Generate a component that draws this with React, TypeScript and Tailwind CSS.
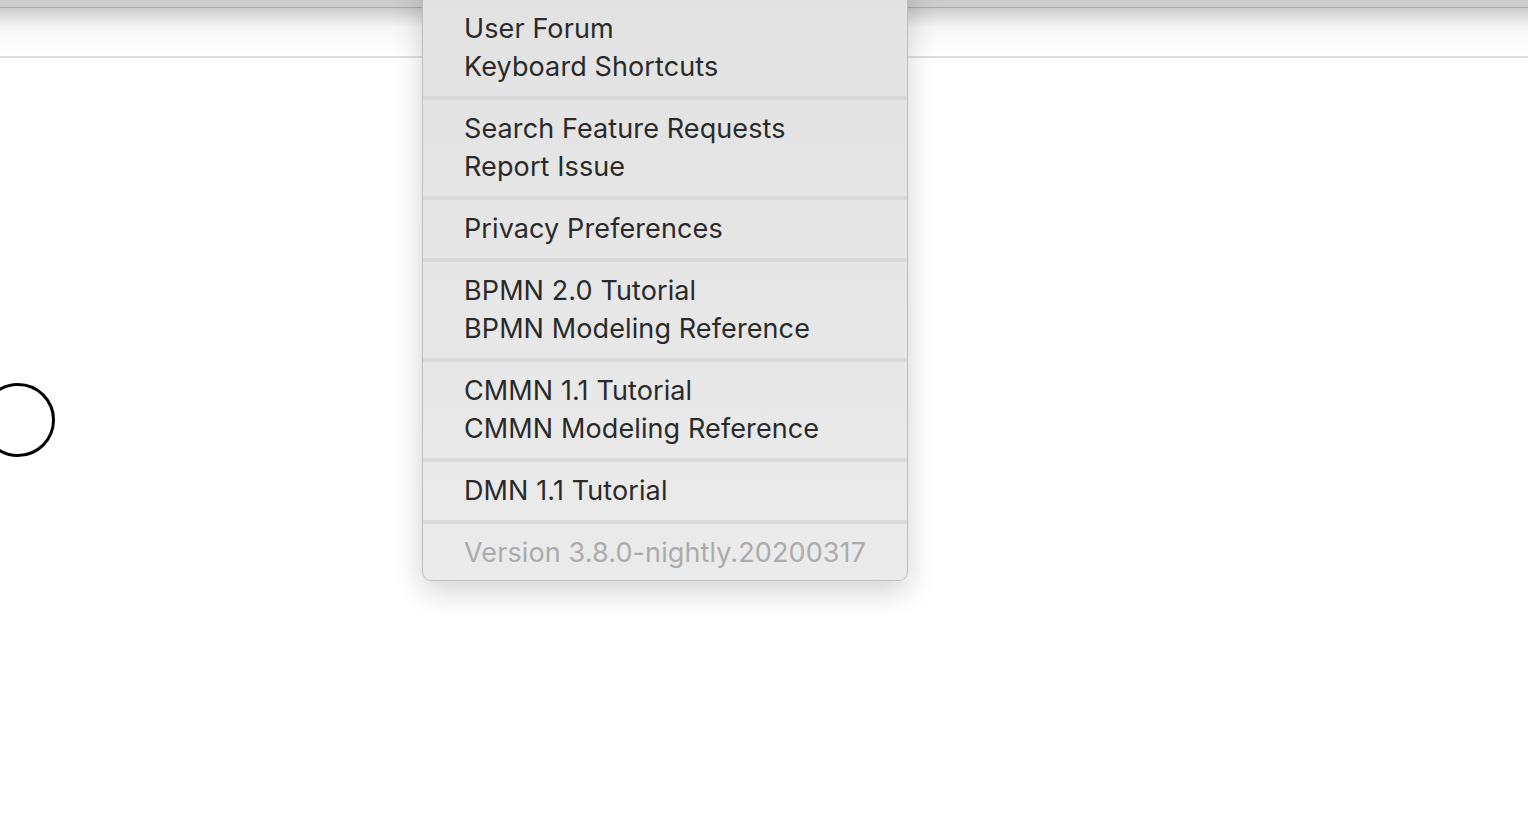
import React from "react";

const groups: string[][] = [
  ["Documentation", "User Forum", "Keyboard Shortcuts"],
  ["Search Feature Requests", "Report Issue"],
  ["Privacy Preferences"],
  ["BPMN 2.0 Tutorial", "BPMN Modeling Reference"],
  ["CMMN 1.1 Tutorial", "CMMN Modeling Reference"],
  ["DMN 1.1 Tutorial"],
];

export default function App() {
  return (
    <div
      className="relative w-[1528px] h-[824px] overflow-hidden bg-white"
      style={{ fontFamily: "Inter, 'Noto Sans', sans-serif" }}
    >
      {/* title bar + toolbar */}
      <div className="h-[7px] bg-[#cdcdcd]" />
      <div className="h-px bg-[#a9a9a9]" />
      <div className="h-[48px] bg-gradient-to-b from-[#cbcbcb] via-[#f6f6f6] via-40% to-white" />
      <div className="h-[2px] bg-[#dedede]" />

      {/* canvas */}
      <div className="relative">
        <div className="absolute left-[-19px] top-[325px] w-[74px] h-[74px] rounded-full border-[3px] border-black" />
      </div>

      {/* help menu */}
      <div className="absolute left-[422px] top-[-29px] w-[486px] rounded-b-[9px] border border-[#bfbfbf] bg-gradient-to-b from-[#e2e2e2] to-[#ebebeb] shadow-[0_10px_30px_rgba(0,0,0,0.18)] text-[27px] tracking-[0.004em] leading-[38px] text-[#2a2a2a]">
        {groups.map((g, i) => (
          <div key={i} className={i > 0 ? "border-t-4 border-[#d9d9d9] py-[10px]" : "pb-[10px]"}>
            {g.map((item) => (
              <div key={item} className="pl-[41px] whitespace-nowrap">
                {item}
              </div>
            ))}
          </div>
        ))}
        <div className="border-t-4 border-[#d9d9d9] pt-[10px] pb-[8px] pl-[41px] text-[#ababab]">
          Version 3.8.0-nightly.20200317
        </div>
      </div>
    </div>
  );
}
